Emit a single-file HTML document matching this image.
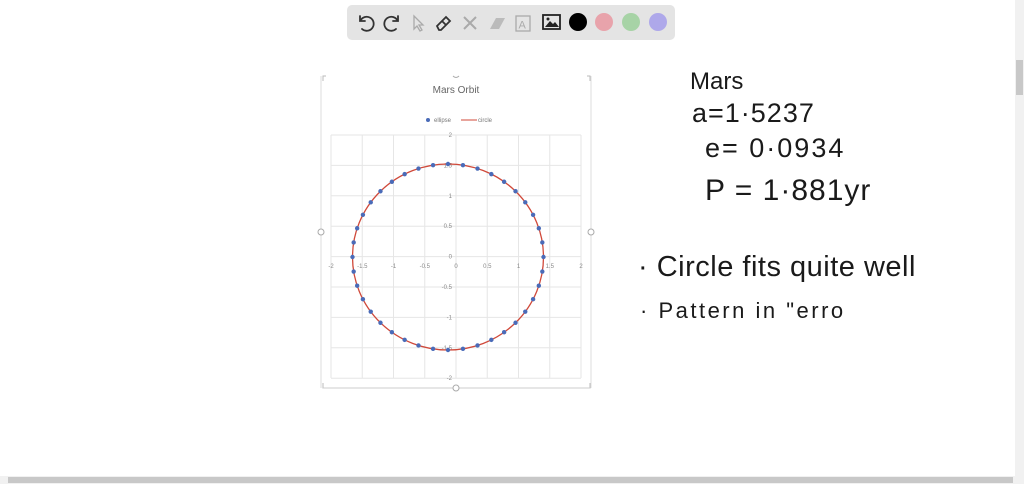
<!DOCTYPE html>
<html><head><meta charset="utf-8"><style>
body{margin:0;width:1024px;height:484px;background:#fff;position:relative;overflow:hidden;font-family:"Liberation Sans",sans-serif}
.tb{position:absolute;left:347px;top:5px;width:328px;height:35px;background:#e4e4e4;border-radius:5px}
.hw{position:absolute;font-family:"Liberation Sans",sans-serif;color:#1a1a1a;white-space:nowrap}
</style></head><body>
<div class="tb">
<svg width="328" height="35" viewBox="0 0 328 35">
<g fill="none" stroke="#333" stroke-width="1.8" stroke-linecap="round">
<path d="M13 11 v5 h5"/><path d="M13.5 15.5 A7 7 0 1 1 15 24"/>
<path d="M51 11 v5 h-5"/><path d="M50.5 15.5 A7 7 0 1 0 49 24"/>
</g>
<path d="M67 11 l0 13 l3-3 l3 5 l2-1 l-3-5 l4 0z" fill="none" stroke="#aaa" stroke-width="1.3"/>
<path d="M92 25 l-2-4 l9-9 l4 4 l-9 9z M95 16 l4 4" fill="none" stroke="#333" stroke-width="1.8"/>
<path d="M117 12 l12 12 M129 12 l-12 12" stroke="#aaa" stroke-width="2"/>
<path d="M143 24 l6-11 h9 l-6 11z" fill="#bbb"/>
<rect x="169" y="11" width="14" height="15" fill="none" stroke="#aaa" stroke-width="1.3"/><text x="171.5" y="23.5" font-size="11" fill="#aaa">A</text>
<rect x="196" y="10" width="17" height="14" fill="none" stroke="#222" stroke-width="1.8"/><path d="M198 22 l5-6 l3 3 l2-2 l4 5z" fill="#222"/><circle cx="201" cy="14" r="1.5" fill="#222"/>
<circle cx="231" cy="17" r="9" fill="#000"/>
<circle cx="257" cy="17" r="9" fill="#e8a3ab"/>
<circle cx="284" cy="17" r="9" fill="#a7d3a6"/>
<circle cx="311" cy="17" r="9" fill="#aea8ea"/>
</svg></div>

<svg style="position:absolute;left:0;top:0" width="1024" height="484">
<g stroke="#bbb" fill="none" stroke-width="1">
<path d="M323 81 v-5 h3 M590 81 v-5 h-3 M323 383 v5 h3 M590 383 v5 h-3"/>
<path d="M321 76 V388 M591 76 V388" stroke="#ddd"/>
<path d="M323 388 H590" stroke="#ccc"/>
</g>
<circle cx="456" cy="388" r="3" fill="#fff" stroke="#aaa"/>
<circle cx="321" cy="232" r="3" fill="#fff" stroke="#aaa"/>
<circle cx="591" cy="232" r="3" fill="#fff" stroke="#aaa"/>
<path d="M453 76 q3 3 6 0" stroke="#aaa" fill="none"/>
<text x="456" y="93" font-size="10" fill="#666" text-anchor="middle">Mars Orbit</text>
<circle cx="428" cy="120" r="2" fill="#4a6bb8"/><text x="434" y="122" font-size="6" fill="#777">ellipse</text>
<line x1="461" y1="120" x2="477" y2="120" stroke="#d0493a"/><text x="478" y="122" font-size="6" fill="#777">circle</text>
<g id="grid" stroke="#e6e6e6" stroke-width="1"></g>
<g id="lab" font-size="6" fill="#888"></g>
<ellipse cx="448" cy="257" rx="95.5" ry="93" fill="none" stroke="#d0493a" stroke-width="1.3"/>
<g id="dots" fill="#4a6bb8"></g>
<rect x="1015" y="0" width="9" height="476" fill="#f1f1f1"/>
<rect x="1016" y="60" width="7" height="35" fill="#c8c8c8"/>
<rect x="0" y="476" width="1024" height="8" fill="#f1f1f1"/>
<rect x="8" y="477" width="1005" height="6" fill="#c8c8c8"/>
</svg>

<div class="hw" style="left:690px;top:68px;font-size:24px">Mars</div>
<div class="hw" style="left:692px;top:98px;font-size:27px;letter-spacing:1px">a=1·5237</div>
<div class="hw" style="left:705px;top:133px;font-size:27px;letter-spacing:2px">e= 0·0934</div>
<div class="hw" style="left:705px;top:174px;font-size:30px;letter-spacing:1px">P = 1·881yr</div>
<div class="hw" style="left:638px;top:251px;font-size:29px;letter-spacing:0.5px">· Circle fits quite well</div>
<div class="hw" style="left:640px;top:298px;font-size:22px;letter-spacing:2.5px">· Pattern in "erro</div>

<script>
var ns="http://www.w3.org/2000/svg";
var g=document.getElementById('grid'),l=document.getElementById('lab'),d=document.getElementById('dots');
function el(p,t,a){var e=document.createElementNS(ns,t);for(var k in a)e.setAttribute(k,a[k]);p.appendChild(e);return e;}
for(var i=0;i<=8;i++){var x=331+i*31.25;el(g,'line',{x1:x,y1:135,x2:x,y2:378});
var v=(-2+i*0.5);var t=el(l,'text',{x:x,y:268,'text-anchor':'middle'});t.textContent=String(v);}
for(var j=0;j<=8;j++){var y=135+j*30.4;el(g,'line',{x1:331,y1:y,x2:581,y2:y});
var v=2-j*0.5;var t=el(l,'text',{x:452,y:y+2,'text-anchor':'end'});t.textContent=String(v);}
for(var k=0;k<40;k++){var a=k/40*2*Math.PI;el(d,'circle',{cx:448+95.5*Math.cos(a),cy:257-93*Math.sin(a),r:2.2});}
</script>
</body></html>
